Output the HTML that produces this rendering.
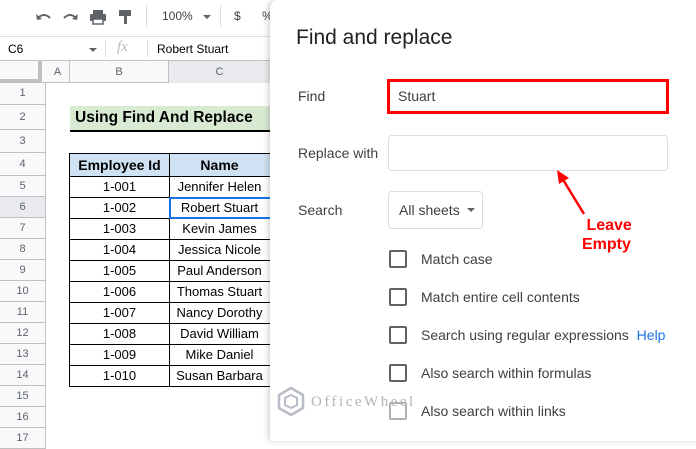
<!DOCTYPE html>
<html><head><meta charset="utf-8"><style>
*{margin:0;padding:0;box-sizing:border-box}
body{width:696px;height:441px;overflow:hidden;background:#fff;font-family:"Liberation Sans",Arial,sans-serif;position:relative}
.a{position:absolute}
.rh{position:absolute;left:0;width:46px;border-bottom:1px solid #c0c0c0;border-right:1px solid #c0c0c0;background:#f8f9fa;color:#5f6368;font-size:11px;text-align:center}
.tc{position:absolute;border:1px solid #000;font-size:13px;text-align:center;color:#000}
.cb{position:absolute;left:389px;width:18px;height:18px;border:2px solid #5f6368;border-radius:2px}
.cl{position:absolute;left:421px;font-size:14px;color:#3c4043}
</style></head><body>
<div class="a" style="left:0;top:0;width:280px;height:36px;background:#fff"></div>
<svg class="a" style="left:34px;top:9px" width="100" height="16" viewBox="0 0 100 16">
<path d="M4 9 Q10 3 16 9" stroke="#5f6368" stroke-width="2" fill="none"/><path d="M2 5 L3 11 L8 10 Z" fill="#5f6368"/>
<path d="M30 9 Q36 3 42 9" stroke="#5f6368" stroke-width="2" fill="none"/><path d="M44 5 L43 11 L38 10 Z" fill="#5f6368"/>
<rect x="59" y="1" width="10" height="4" fill="#5f6368"/><rect x="56" y="5" width="16" height="7" rx="1" fill="#5f6368"/><rect x="59" y="10" width="10" height="5" fill="#fff" stroke="#5f6368" stroke-width="1.5"/>
<rect x="85" y="1" width="12" height="6" fill="#5f6368"/><rect x="90" y="7" width="3" height="8" fill="#5f6368"/>
</svg>
<div class="a" style="left:146px;top:5px;width:1px;height:22px;background:#dadce0"></div>
<div class="a" style="left:162px;top:9px;font-size:12px;color:#3c4043">100%</div>
<div class="a" style="left:203px;top:15px;border-left:4px solid transparent;border-right:4px solid transparent;border-top:4px solid #5f6368"></div>
<div class="a" style="left:220px;top:5px;width:1px;height:22px;background:#dadce0"></div>
<div class="a" style="left:234px;top:9px;font-size:12px;color:#3c4043">$</div>
<div class="a" style="left:262px;top:9px;font-size:12px;color:#3c4043">%</div>
<div class="a" style="left:0;top:36px;width:280px;height:25px;border-top:1px solid #e0e0e0;border-bottom:1px solid #c0c0c0"></div>
<div class="a" style="left:8px;top:42px;font-size:12px;color:#000">C6</div>
<div class="a" style="left:89px;top:48px;border-left:4px solid transparent;border-right:4px solid transparent;border-top:4px solid #5f6368"></div>
<div class="a" style="left:105px;top:40px;width:1px;height:17px;background:#dadce0"></div>
<div class="a" style="left:117px;top:39px;font-size:15px;color:#bbb;font-family:'Liberation Serif',serif;font-style:italic">fx</div>
<div class="a" style="left:147px;top:40px;width:1px;height:17px;background:#dadce0"></div>
<div class="a" style="left:157px;top:42px;font-size:12px;color:#000">Robert Stuart</div>
<div class="a" style="left:0;top:61px;width:280px;height:22px;background:#f8f9fa;border-bottom:1px solid #c0c0c0"></div>
<div class="a" style="left:0;top:61px;width:42px;height:22px;border-right:4px solid #c0c0c0;border-bottom:4px solid #c0c0c0;background:#f8f9fa"></div>
<div class="a" style="left:46px;top:61px;width:24px;height:22px;border-right:1px solid #c0c0c0;font-size:11px;color:#5f6368;text-align:center;line-height:22px">A</div>
<div class="a" style="left:70px;top:61px;width:99px;height:22px;border-right:1px solid #c0c0c0;font-size:11px;color:#5f6368;text-align:center;line-height:22px">B</div>
<div class="a" style="left:169px;top:61px;width:101px;height:22px;background:#e8eaed;font-size:11px;color:#5f6368;text-align:center;line-height:22px">C</div>
<div class="rh" style="top:83px;height:22px;line-height:21px">1</div>
<div class="rh" style="top:105px;height:25px;line-height:24px">2</div>
<div class="rh" style="top:130px;height:23px;line-height:22px">3</div>
<div class="rh" style="top:153px;height:23px;line-height:22px">4</div>
<div class="rh" style="top:176px;height:21px;line-height:20px">5</div>
<div class="rh" style="top:197px;height:21px;line-height:20px;background:#e8eaed">6</div>
<div class="rh" style="top:218px;height:21px;line-height:20px">7</div>
<div class="rh" style="top:239px;height:21px;line-height:20px">8</div>
<div class="rh" style="top:260px;height:21px;line-height:20px">9</div>
<div class="rh" style="top:281px;height:21px;line-height:20px">10</div>
<div class="rh" style="top:302px;height:21px;line-height:20px">11</div>
<div class="rh" style="top:323px;height:21px;line-height:20px">12</div>
<div class="rh" style="top:344px;height:21px;line-height:20px">13</div>
<div class="rh" style="top:365px;height:21px;line-height:20px">14</div>
<div class="rh" style="top:386px;height:21px;line-height:20px">15</div>
<div class="rh" style="top:407px;height:21px;line-height:20px">16</div>
<div class="rh" style="top:428px;height:21px;line-height:20px">17</div>
<div class="a" style="left:70px;top:106px;width:200px;height:26px;background:#d9ead3;border-bottom:2px solid #000;font-size:15.5px;font-weight:bold;line-height:24px;padding-left:5px;white-space:nowrap;overflow:hidden">Using Find And Replace</div>
<div class="tc" style="left:69px;top:153px;width:101px;height:24px;background:#cfe2f3;font-weight:bold;font-size:14px;line-height:22px">Employee Id</div>
<div class="tc" style="left:169px;top:153px;width:110px;height:24px;background:#cfe2f3;font-weight:bold;font-size:14px;line-height:22px;padding-right:9px">Name</div>
<div id="rows"></div>
<script>
var d=[["1-001","Jennifer Helen"],["1-002","Robert Stuart"],["1-003","Kevin James"],["1-004","Jessica Nicole"],["1-005","Paul Anderson"],["1-006","Thomas Stuart"],["1-007","Nancy Dorothy"],["1-008","David William"],["1-009","Mike Daniel"],["1-010","Susan Barbara"]];
var h="";d.forEach(function(r,i){var t=176+i*21;h+='<div class="tc" style="left:69px;top:'+t+'px;width:101px;height:22px;line-height:20px">'+r[0]+'</div><div class="tc" style="left:169px;top:'+t+'px;width:110px;height:22px;line-height:20px;padding-right:9px;white-space:nowrap">'+r[1]+'</div>';});
h+='<div class="a" style="left:169px;top:197px;width:104px;height:22px;border:2px solid #1a73e8"></div>';
document.getElementById("rows").innerHTML=h;
</script>
<div class="a" style="left:270px;top:0;width:440px;height:441px;background:#fff;border-radius:8px 0 0 0;box-shadow:-2px 0 6px rgba(0,0,0,0.18)"></div>
<div class="a" style="left:296px;top:26px;font-size:21px;color:#202124">Find and replace</div>
<div class="a" style="left:298px;top:88px;font-size:14px;color:#3c4043">Find</div>
<div class="a" style="left:387px;top:79px;width:282px;height:35px;border:3px solid #f00;font-size:14px;color:#3c4043;padding-left:8px;line-height:29px">Stuart</div>
<div class="a" style="left:298px;top:145px;font-size:14px;color:#3c4043">Replace with</div>
<div class="a" style="left:388px;top:135px;width:280px;height:36px;border:1px solid #dadce0;border-radius:4px"></div>
<div class="a" style="left:298px;top:202px;font-size:14px;color:#3c4043">Search</div>
<div class="a" style="left:388px;top:191px;width:95px;height:38px;border:1px solid #dadce0;border-radius:4px;font-size:14px;color:#3c4043;line-height:36px;padding-left:10px">All sheets</div>
<div class="a" style="left:467px;top:208px;border-left:4px solid transparent;border-right:4px solid transparent;border-top:4px solid #5f6368"></div>
<svg class="a" style="left:553px;top:168px" width="36" height="50"><line x1="31" y1="46" x2="9" y2="10" stroke="#f00" stroke-width="2.5"/><path d="M4 2 L16 10 L6 16 Z" fill="#f00"/></svg>
<div class="a" style="left:582px;top:216px;font-size:16px;font-weight:bold;color:#f00;line-height:19px">&nbsp;Leave<br>Empty</div>
<div class="cb" style="top:250px"></div><div class="cl" style="top:251px">Match case</div>
<div class="cb" style="top:288px"></div><div class="cl" style="top:289px">Match entire cell contents</div>
<div class="cb" style="top:326px"></div><div class="cl" style="top:327px">Search using regular expressions <span style="color:#1a73e8;margin-left:4px">Help</span></div>
<div class="cb" style="top:364px"></div><div class="cl" style="top:365px">Also search within formulas</div>
<div class="cb" style="top:402px;opacity:.5"></div><div class="cl" style="top:403px">Also search within links</div>
<svg class="a" style="left:277px;top:386px" width="28" height="30"><path d="M14 2 L26 9 L26 22 L14 29 L2 22 L2 9 Z" fill="none" stroke="#b8bcc4" stroke-width="2.5"/><path d="M14 9 L20 12 L20 19 L14 22 L8 19 L8 12 Z" fill="none" stroke="#b8bcc4" stroke-width="2"/></svg>
<div class="a" style="left:311px;top:394px;font-family:'Liberation Serif',serif;font-size:15px;letter-spacing:2.5px;color:#b0b4bb">OfficeWheel</div>
</body></html>
